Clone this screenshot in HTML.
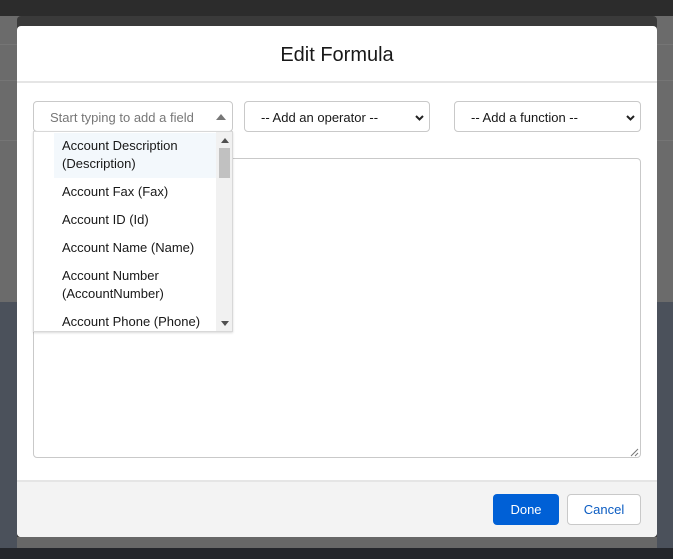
<!DOCTYPE html>
<html><head><style>
*{box-sizing:border-box;margin:0;padding:0}
body{width:673px;height:559px;overflow:hidden;position:relative;background:#6b6b6b;font-family:"Liberation Sans",Arial,sans-serif;font-size:13px;color:#181818}
.abs{position:absolute}
.sel{position:absolute;top:101px;height:31px;border:1px solid #c9c9c9;border-radius:4px;background:#fff;padding-left:16px;line-height:31px;color:#181818}
.item{position:absolute;left:20px;width:162px;padding-left:8px;color:#181818;line-height:18px}
</style></head><body>
<div class="abs" style="left:0;top:0;width:673px;height:16px;background:#2c2c2c"></div>
<div class="abs" style="left:0;top:44px;width:673px;height:1px;background:#757575"></div>
<div class="abs" style="left:0;top:80px;width:673px;height:1px;background:#757575"></div>
<div class="abs" style="left:0;top:140px;width:673px;height:1px;background:#757575"></div>
<div class="abs" style="left:0;top:302px;width:673px;height:257px;background:#4b515b"></div>
<div class="abs" style="left:17px;top:16px;width:640px;height:532px;background:#3a3a3a;border-radius:4px"></div>
<div class="abs" style="left:17px;top:537px;width:640px;height:11px;background:#676767"></div>
<div class="abs" style="left:0;top:548px;width:673px;height:11px;background:#24262b"></div>

<div class="abs" style="left:17px;top:26px;width:640px;height:511px;background:#fff;border-radius:4px;overflow:hidden">
  <div class="abs" style="left:0;top:0;width:640px;height:57px;border-bottom:2px solid #e5e5e5;text-align:center;font-size:20px;line-height:58px;color:#181818">Edit Formula</div>
  <div class="abs" style="left:0;top:454px;width:640px;height:57px;background:#f3f3f3;border-top:2px solid #e5e5e5"></div>
  <div class="abs" style="left:476px;top:468px;width:66px;height:31px;background:#0060d6;border-radius:4px;color:#fff;text-align:center;line-height:31px">Done</div>
  <div class="abs" style="left:550px;top:468px;width:74px;height:31px;background:#fff;border:1px solid #c9c9c9;border-radius:4px;color:#0b5cc2;text-align:center;line-height:29px">Cancel</div>
</div>

<div class="abs" style="left:33px;top:158px;width:608px;height:300px;border:1px solid #c9c9c9;border-radius:4px;background:#fff"></div>
<svg class="abs" style="left:630px;top:448px" width="9" height="9"><path d="M1 8L8 1M5 8L8 5" stroke="#777" stroke-width="1"/></svg>

<div class="sel" style="left:33px;width:200px;color:#777">Start typing to add a field<svg class="abs" style="left:182px;top:12px" width="10" height="6"><path d="M0 6L5 0L10 6Z" fill="#777"/></svg></div>
<div class="sel" style="left:244px;width:186px">-- Add an operator --<svg class="abs" style="left:170px;top:13px" width="9" height="6"><path d="M1 1L4.5 4.5L8 1" stroke="#222" stroke-width="2" fill="none"/></svg></div>
<div class="sel" style="left:454px;width:187px">-- Add a function --<svg class="abs" style="left:171px;top:13px" width="9" height="6"><path d="M1 1L4.5 4.5L8 1" stroke="#222" stroke-width="2" fill="none"/></svg></div>

<div class="abs" style="left:33px;top:131px;width:200px;height:201px;background:#fff;border:1px solid #d8d8d8;box-shadow:0 1px 2px rgba(0,0,0,.15);overflow:hidden">
  <div class="abs" style="left:20px;top:1px;width:163px;height:45px;background:#f3f8fc"></div>
  <div class="item" style="top:5px">Account Description (Description)</div>
  <div class="item" style="top:51px">Account Fax (Fax)</div>
  <div class="item" style="top:79px">Account ID (Id)</div>
  <div class="item" style="top:107px">Account Name (Name)</div>
  <div class="item" style="top:135px">Account Number (AccountNumber)</div>
  <div class="item" style="top:181px">Account Phone (Phone)</div>
  <div class="abs" style="left:182px;top:0;width:17px;height:200px;background:#f1f1f1"></div>
  <div class="abs" style="left:185px;top:16px;width:11px;height:30px;background:#c1c1c1"></div>
  <svg class="abs" style="left:187px;top:6px" width="8" height="5"><path d="M0 5L4 0L8 5Z" fill="#505050"/></svg>
  <svg class="abs" style="left:187px;top:189px" width="8" height="5"><path d="M0 0L4 5L8 0Z" fill="#505050"/></svg>
</div>
</body></html>
